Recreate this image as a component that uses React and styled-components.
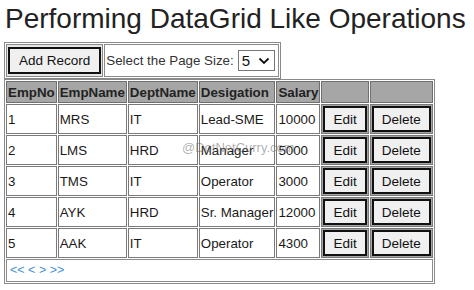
import React from 'react'
import styled, { createGlobalStyle } from 'styled-components'

const GlobalStyle = createGlobalStyle`
  html, body {
    margin: 0;
    padding: 0;
    background: #fff;
  }
  body {
    font-family: 'Liberation Sans', Arial, sans-serif;
    font-size: 13.33px;
    color: #1a1a1a;
  }
`

const rows = [
  { no: 1, name: 'MRS', dept: 'IT', desig: 'Lead-SME', salary: 10000 },
  { no: 2, name: 'LMS', dept: 'HRD', desig: 'Manager', salary: 5000 },
  { no: 3, name: 'TMS', dept: 'IT', desig: 'Operator', salary: 3000 },
  { no: 4, name: 'AYK', dept: 'HRD', desig: 'Sr. Manager', salary: 12000 },
  { no: 5, name: 'AAK', dept: 'IT', desig: 'Operator', salary: 4300 },
]

export default function App() {
  return (
    <Page>
      <GlobalStyle />
      <Title>Performing DataGrid Like Operations</Title>
      <Toolbar>
        <tbody>
          <tr>
            <ToolCell $shade>
              <Button $wide>Add Record</Button>
            </ToolCell>
            <ToolCell>
              <SizeLabel>
                Select the Page Size:
                <SelectWrap>
                  <Select defaultValue="5">
                    <option>5</option>
                    <option>10</option>
                    <option>20</option>
                  </Select>
                  <Chevron width="12" height="8" viewBox="0 0 12 8">
                    <path d="M1.5 1.5 L6 6 L10.5 1.5" fill="none" stroke="#111" strokeWidth="1.8" />
                  </Chevron>
                </SelectWrap>
              </SizeLabel>
            </ToolCell>
          </tr>
        </tbody>
      </Toolbar>
      <GridWrap>
        <Grid>
          <thead>
            <tr>
              <Th>EmpNo</Th>
              <Th>EmpName</Th>
              <Th>DeptName</Th>
              <Th>Desigation</Th>
              <Th>Salary</Th>
              <Th />
              <Th />
            </tr>
          </thead>
          <tbody>
            {rows.map((r) => (
              <tr key={r.no}>
                <Td>{r.no}</Td>
                <Td>{r.name}</Td>
                <Td>{r.dept}</Td>
                <Td>{r.desig}</Td>
                <Td>{r.salary}</Td>
                <ActionCell>
                  <Button>Edit</Button>
                </ActionCell>
                <ActionCell>
                  <Button>Delete</Button>
                </ActionCell>
              </tr>
            ))}
            <tr>
              <PagerCell colSpan={7}>
                <PagerLink href="#">&lt;&lt;</PagerLink> <PagerLink href="#">&lt;</PagerLink>{' '}
                <PagerLink href="#">&gt;</PagerLink> <PagerLink href="#">&gt;&gt;</PagerLink>
              </PagerCell>
            </tr>
          </tbody>
        </Grid>
        <Watermark>@DotNetCurry.com</Watermark>
      </GridWrap>
    </Page>
  )
}

const Page = styled.div`
  padding: 3px 0 0 4px;
`

const Title = styled.h1`
  margin: 0 0 8px 1px;
  font-family: 'Liberation Sans', Arial, sans-serif;
  font-weight: normal;
  font-size: 28px;
  line-height: 31px;
  color: #222;
`

const Toolbar = styled.table`
  border: 1px solid #8a8a8a;
  border-spacing: 1px;
`

const ToolCell = styled.td`
  border: 1px solid #8a8a8a;
  padding: 2px 1px;
  background: ${(p) => (p.$shade ? '#e6e6e6' : '#fff')};
  vertical-align: middle;
`

const SizeLabel = styled.label`
  display: flex;
  align-items: center;
  gap: 4px;
  padding: 0 2px 0 0;
  color: #333;
  white-space: nowrap;
`

const SelectWrap = styled.span`
  position: relative;
  display: inline-flex;
`

const Select = styled.select`
  appearance: none;
  width: 37px;
  height: 21px;
  padding: 0 0 0 3px;
  border: 1px solid #767676;
  border-radius: 0;
  background: #fff;
  font-family: 'Liberation Sans', Arial, sans-serif;
  font-size: 15px;
  color: #111;
`

const Chevron = styled.svg`
  position: absolute;
  right: 5px;
  top: 7px;
  pointer-events: none;
`

const Button = styled.button`
  display: block;
  height: ${(p) => (p.$wide ? '27px' : '26px')};
  padding: 0 ${(p) => (p.$wide ? '9px' : '8px')};
  border: 2px solid #111;
  border-radius: 0;
  background: #f0f0f0;
  font-family: 'Liberation Sans', Arial, sans-serif;
  font-size: 13.5px;
  color: #111;
  white-space: nowrap;
`

const GridWrap = styled.div`
  position: relative;
  display: inline-block;
`

const Grid = styled.table`
  width: 429px;
  border: 1px solid #8a8a8a;
  border-spacing: 1px;
  font-size: 13.33px;
`

const Th = styled.th`
  border: 1px solid #6f6f6f;
  padding: 3px 1px 2px;
  background: #a6a6a6;
  color: #222;
  font-weight: bold;
  text-align: left;
  white-space: nowrap;
  height: 15px;
`

const Td = styled.td`
  border: 1px solid #7a7a7a;
  padding: 1px;
  color: #1a1a1a;
  white-space: nowrap;
`

const ActionCell = styled.td`
  border: 1px solid #7a7a7a;
  padding: 1px;
  background: #a6a6a6;
  width: 1px;
`

const PagerCell = styled.td`
  border: 1px solid #8a8a8a;
  padding: 3px 3px 4px;
  font-size: 12.5px;
`

const PagerLink = styled.a`
  color: #4a8fd6;
  text-decoration: none;
`

const Watermark = styled.span`
  position: absolute;
  left: 178px;
  top: 61px;
  font-size: 13px;
  color: rgba(110, 110, 110, 0.55);
  pointer-events: none;
`
